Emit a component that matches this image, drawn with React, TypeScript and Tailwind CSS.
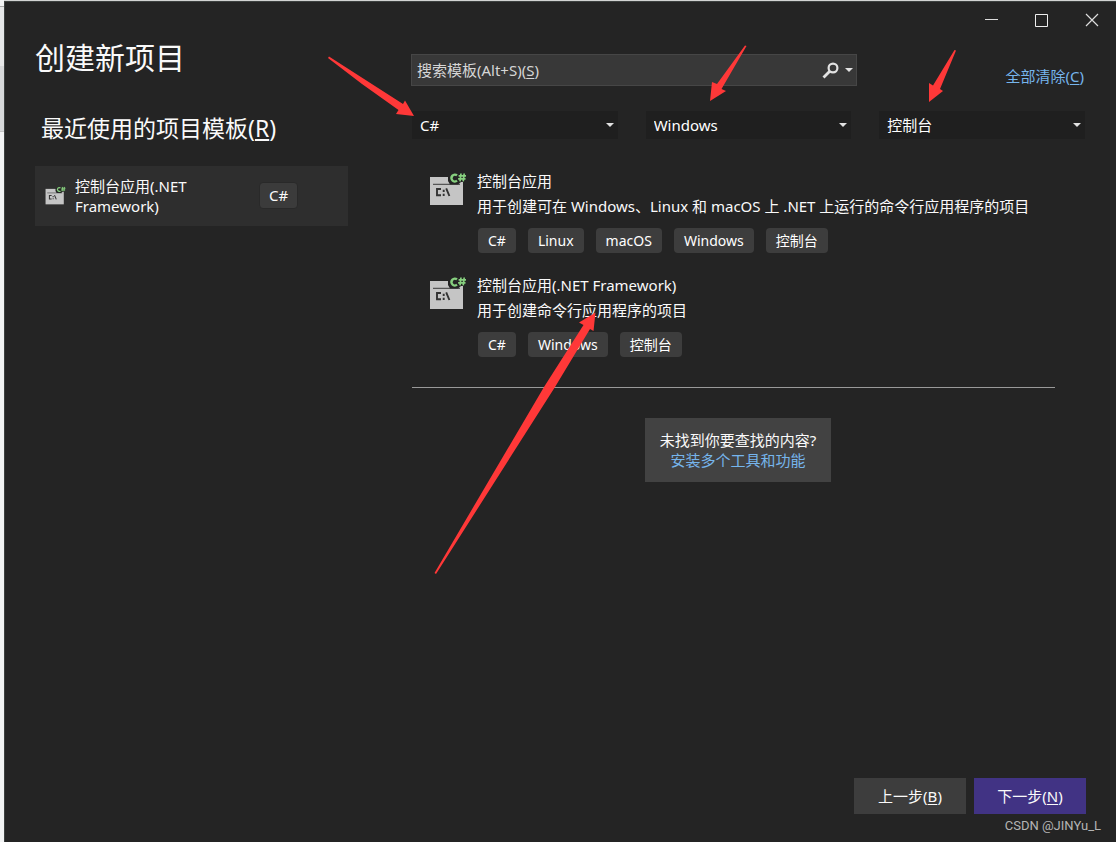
import React from "react";

const ARROWS = [
  "328,58 329,56.5 403,104 405,100.5 414,116 396,114 398.5,110 362,84",
  "745,45.5 746.5,46 721.5,89 726,91 710,101 712,82 717,84",
  "954.5,50 956,50.5 940,89 943,91 929,102 929,83 933,85.5",
  "434.5,573 544,387 583.5,325 579,322.5 595.5,312.5 593.5,331 590,329 555,387 436,574",
];

function ConsoleIcon({ className }: { className: string }) {
  return (
    <svg viewBox="0 0 38 34" className={className} aria-hidden="true">
      <rect x="1" y="5" width="33" height="28" fill="#c5c5c5" />
      <path d="M4 12.3H31" stroke="#3a3a3a" strokeWidth="1" />
      <path d="M19 4H35V10H32L29 12.5H21L19 9Z" fill="#242424" />
      <path d="M28 3.4A3.3 3.5 0 1 0 28 8.7" fill="none" stroke="#87d07f" strokeWidth="2.3" />
      <path d="M32 1.5L31 9.3M35.2 1.5L34.2 9.3M29.6 3.9H37M29.1 6.9H36.5" fill="none" stroke="#87d07f" strokeWidth="1.7" />
      <path d="M12 17H8V23.2H12M14.7 17.8V20M14.7 21.8V24M17.2 16.4L20.4 24" fill="none" stroke="#333" strokeWidth="1.9" />
    </svg>
  );
}

function Caret() {
  return (
    <svg viewBox="0 0 8 4" className="h-1 w-2 shrink-0" aria-hidden="true">
      <path d="M0 0H8L4 4Z" fill="#e2e2e2" />
    </svg>
  );
}

function Filter({ label, value, options }: { label: string; value: string; options: string[] }) {
  return (
    <div className="relative">
      <select
        aria-label={label}
        defaultValue={value}
        className="block h-7 w-full appearance-none bg-[#1f1f1f] px-2 text-white outline-none"
      >
        {options.map((o) => (
          <option key={o}>{o}</option>
        ))}
      </select>
      <span className="pointer-events-none absolute inset-y-0 right-1 flex items-center">
        <Caret />
      </span>
    </div>
  );
}

function Tag({ children }: { children: React.ReactNode }) {
  return (
    <span className="flex h-[25px] items-center rounded bg-[#3d3d3d] px-[10px] text-sm text-white">{children}</span>
  );
}

function Template({ name, description, tags }: { name: string; description: string; tags: string[] }) {
  return (
    <li className="flex gap-[10px] pl-[18px]">
      <ConsoleIcon className="mt-[3px] h-[34px] w-[38px] shrink-0" />
      <div className="min-w-0">
        <h3 className="leading-[25px]">{name}</h3>
        <p className="leading-[25px]">{description}</p>
        <div className="mt-[9px] flex flex-wrap gap-3 pl-px">
          {tags.map((t) => (
            <Tag key={t}>{t}</Tag>
          ))}
        </div>
      </div>
    </li>
  );
}

export default function App() {
  return (
    <div className="relative flex min-h-screen bg-[#d2d4d3] font-['Noto_Sans','Noto_Sans_CJK_SC',sans-serif] text-[15px] leading-5 text-[#fafafa]">
      <div className="flex w-1 shrink-0 flex-col bg-[#f2f3f4]">
        <div className="mt-[6px] h-[60px] border-t border-[#a9a9a9] bg-[#e6e7e8]" />
        <div className="h-[66px] border-b border-[#c4c4c4] bg-[#d7d8da]" />
      </div>
      <div className="mt-px flex min-w-0 flex-1 flex-col border-t border-l border-[#3d4140] bg-[#242424]">
        <header className="flex h-9 justify-end">
          <button aria-label="最小化" className="flex w-[50px] items-center justify-center">
            <svg viewBox="0 0 16 16" className="size-4"><path d="M2 7.5H15" stroke="#ddd" /></svg>
          </button>
          <button aria-label="最大化" className="flex w-[50px] items-center justify-center">
            <svg viewBox="0 0 16 16" className="size-4"><path d="M2.5 2.5H14.5V14.5H2.5Z" fill="none" stroke="#eee" /></svg>
          </button>
          <button aria-label="关闭" className="flex w-[50px] items-center justify-center">
            <svg viewBox="0 0 16 16" className="size-4"><path d="M3 2L15 14M15 2L3 14" stroke="#ddd" strokeWidth="1.2" /></svg>
          </button>
        </header>

        <div className="flex flex-1 gap-[63px] pr-[31px] pl-[30px]">
          <aside className="w-[313px] shrink-0">
            <h1 className="text-[30px] leading-10">创建新项目</h1>
            <h2 className="mt-8 pl-[6px] text-[23px] leading-9">
              最近使用的项目模板(<u className="underline-offset-2">R</u>)
            </h2>
            <button className="mt-5 flex h-[60px] w-full items-center bg-[#2e2e2e] pl-[10px] text-left">
              <ConsoleIcon className="mb-[2px] h-[19px] w-[21px] shrink-0" />
              <span className="ml-[9px] w-[184px] pr-10">控制台应用(.NET Framework)</span>
              <span className="mb-[2px] flex h-[27px] items-center rounded border border-[#292929] bg-[#3b3b3b] px-[9px]">C#</span>
            </button>
          </aside>

          <main className="flex min-w-0 flex-1 flex-col pt-4">
            <div className="flex items-center justify-between">
              <div className="relative flex h-8 w-[446px] items-center border border-[#464646] bg-[#383838] pr-[3px] pl-[5px]">
                <input id="search" type="text" className="absolute inset-0 bg-transparent px-[5px] outline-none" />
                <label htmlFor="search" className="pointer-events-none flex-1 text-[#d6d6d6]">
                  搜索模板(Alt+S)(<u className="underline-offset-2">S</u>)
                </label>
                <button aria-label="搜索" className="relative flex items-center gap-[6px]">
                  <svg viewBox="0 0 17 17" className="size-[17px]" aria-hidden="true">
                    <circle cx="11" cy="6" r="4.4" fill="none" stroke="#e2e2e2" strokeWidth="2.2" />
                    <path d="M8 9L1.5 15.5" stroke="#e2e2e2" strokeWidth="2.8" />
                  </svg>
                  <Caret />
                </button>
              </div>
              <a href="#clear" className="mt-3 pr-px text-[#76b5ec]">
                全部清除(<u className="underline-offset-2">C</u>)
              </a>
            </div>

            <div className="mt-[25px] grid grid-cols-3 gap-7 pl-px">
              <Filter label="语言" value="C#" options={["C#", "C++", "F#"]} />
              <Filter label="平台" value="Windows" options={["Windows", "Linux", "macOS"]} />
              <Filter label="项目类型" value="控制台" options={["控制台", "桌面", "库"]} />
            </div>

            <ul className="mt-[30px] flex flex-col gap-5">
              <Template
                name="控制台应用"
                description="用于创建可在 Windows、Linux 和 macOS 上 .NET 上运行的命令行应用程序的项目"
                tags={["C#", "Linux", "macOS", "Windows", "控制台"]}
              />
              <Template
                name="控制台应用(.NET Framework)"
                description="用于创建命令行应用程序的项目"
                tags={["C#", "Windows", "控制台"]}
              />
            </ul>

            <hr className="mt-[30px] mr-[30px] ml-px border-[#999]" />
            <div className="mt-[30px] mr-5 flex flex-col items-center self-center bg-[#424242] px-[15px] py-3 text-center">
              <p>未找到你要查找的内容?</p>
              <a href="#install" className="text-[#76b5ec]">安装多个工具和功能</a>
            </div>
          </main>
        </div>

        <footer className="flex flex-col items-end">
          <div className="flex gap-2 pr-[30px]">
            <button className="h-9 w-28 bg-[#3d3d3d]">上一步(<u className="underline-offset-2">B</u>)</button>
            <button className="h-9 w-28 bg-[#413384]">下一步(<u className="underline-offset-2">N</u>)</button>
          </div>
          <p className="mt-[2px] mb-[6px] pr-[15px] font-[Roboto,sans-serif] text-[13px] text-[#b4b4b4]">CSDN @JINYu_L</p>
        </footer>
      </div>

      <svg viewBox="0 0 1116 842" className="pointer-events-none absolute top-0 left-0 h-[842px] w-[1116px]" aria-hidden="true">
        {ARROWS.map((points) => (
          <polygon key={points} points={points} fill="#ff3838" />
        ))}
      </svg>
    </div>
  );
}
